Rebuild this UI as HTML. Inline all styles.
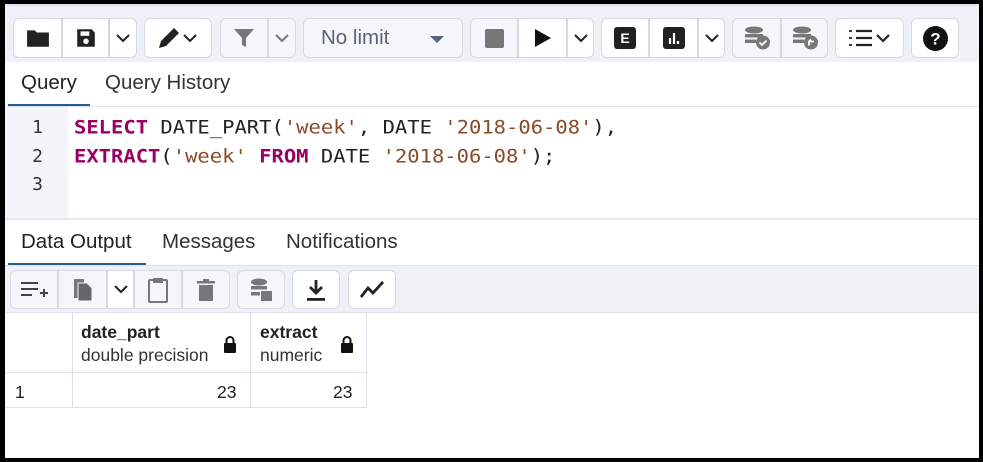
<!DOCTYPE html>
<html><head><meta charset="utf-8"><style>
*{box-sizing:border-box;margin:0;padding:0}
body{width:983px;height:462px;background:#000;position:relative;overflow:hidden;font-family:"Liberation Sans",sans-serif}
#app{position:absolute;left:5px;top:4px;width:974px;height:454px;background:#fff;overflow:hidden}
.abs{position:absolute}
.tb{position:absolute;left:0;top:0;width:974px;height:58px;background:#eef1f5;border-top:2px solid #dfe3ea}
.b{position:absolute;top:12px;height:40px;background:#fff;border:1px solid #d5dae2;display:flex;align-items:center;justify-content:center}
.g{border-radius:6px}
.tab{position:absolute;font-size:20.5px;color:#222}
.code{position:absolute;font-family:"DejaVu Sans Mono","Liberation Mono",monospace;font-size:20.5px;white-space:pre;color:#222;transform:scaleY(0.92);transform-origin:0 0}
.kw{color:#990066;font-weight:bold}
.st{color:#8a4a2a}
.ln{position:absolute;left:0;width:58px;text-align:right;padding-right:20px;font-family:"DejaVu Sans Mono",monospace;font-size:18px;color:#333}
</style></head><body>
<div id="app">
<div class="tb">
 <div class="b g" style="left:8px;width:124px"></div>
 <div class="b" style="left:8px;width:49px;border-radius:6px 0 0 6px"><svg width="24" height="20" viewBox="0 0 22 18"><path d="M1 2h7l2 2h11v13H1z" fill="#222"/></svg></div>
 <div class="b" style="left:57px;width:47px"><svg width="22" height="22" viewBox="0 0 20 20"><path d="M2 2h13l3 3v13H2z" fill="#222"/><rect x="5" y="4" width="8" height="4" fill="#fff"/><circle cx="10" cy="13" r="2.5" fill="#fff"/></svg></div>
 <div class="b" style="left:104px;width:28px;border-radius:0 6px 6px 0"><svg width="14" height="9"><path d="M1 1l6 6 6-6" stroke="#222" stroke-width="2" fill="none"/></svg></div>
 <div class="b g" style="left:139px;width:68px"><svg width="44" height="24"><path d="M3 22l2-7 13-13 5 5-13 13z" fill="#222"/><path d="M28 9l6 6 6-6" stroke="#222" stroke-width="2" fill="none"/></svg></div>
 <div class="b" style="left:215px;width:48px;border-radius:6px 0 0 6px;background:#f4f6f9"><svg width="22" height="22"><path d="M1 2h20l-8 9v9l-4-2v-7z" fill="#777"/></svg></div>
 <div class="b" style="left:263px;width:28px;border-radius:0 6px 6px 0;background:#f4f6f9"><svg width="14" height="9"><path d="M1 1l6 6 6-6" stroke="#777" stroke-width="2" fill="none"/></svg></div>
 <div class="b g" style="left:298px;width:160px;background:#f4f6f9;justify-content:flex-start;padding-left:17px;font-size:20.5px;color:#5a6478">No limit<svg style="position:absolute;right:18px;top:17px" width="14" height="8"><path d="M0 0h14l-7 7z" fill="#5a6478"/></svg></div>
 <div class="b" style="left:465px;width:48px;border-radius:6px 0 0 6px;background:#f4f6f9"><div style="width:19px;height:19px;background:#777;border-radius:2px"></div></div>
 <div class="b" style="left:513px;width:49px"><svg width="18" height="20"><path d="M1 1l16 9-16 9z" fill="#111"/></svg></div>
 <div class="b" style="left:562px;width:27px;border-radius:0 6px 6px 0"><svg width="14" height="9"><path d="M1 1l6 6 6-6" stroke="#222" stroke-width="2" fill="none"/></svg></div>
 <div class="b" style="left:596px;width:48px;border-radius:6px 0 0 6px"><div style="width:22px;height:22px;background:#222;border-radius:3px;color:#fff;font-size:14px;font-weight:bold;text-align:center;line-height:22px">E</div></div>
 <div class="b" style="left:644px;width:49px"><svg width="22" height="22"><rect width="22" height="22" rx="3" fill="#222"/><path d="M7 17v-6M11 17V6M15 17v-3" stroke="#fff" stroke-width="2.2"/></svg></div>
 <div class="b" style="left:693px;width:27px;border-radius:0 6px 6px 0"><svg width="14" height="9"><path d="M1 1l6 6 6-6" stroke="#222" stroke-width="2" fill="none"/></svg></div>
 <div class="b" style="left:727px;width:49px;border-radius:6px 0 0 6px;background:#f4f6f9"><svg width="28" height="24"><ellipse cx="11" cy="4" rx="9" ry="3.5" fill="#777"/><rect x="2" y="8" width="18" height="3.5" fill="#777"/><rect x="2" y="13.5" width="11" height="3.5" fill="#777"/><circle cx="20" cy="16.5" r="7" fill="#777"/><path d="M16.5 16.5l2.5 2.5 4.5-4.5" stroke="#fff" stroke-width="1.8" fill="none"/></svg></div>
 <div class="b" style="left:776px;width:47px;border-radius:0 6px 6px 0;background:#f4f6f9"><svg width="28" height="24"><ellipse cx="11" cy="4" rx="9" ry="3.5" fill="#777"/><rect x="2" y="8" width="18" height="3.5" fill="#777"/><rect x="2" y="13.5" width="11" height="3.5" fill="#777"/><circle cx="20" cy="16.5" r="7" fill="#777"/><path d="M18 19.5v-4h5M18 15.5l2-2" stroke="#fff" stroke-width="1.8" fill="none"/></svg></div>
 <div class="b g" style="left:830px;width:69px"><svg width="46" height="22"><path d="M9 4h16M9 11h16M9 18h16" stroke="#222" stroke-width="2.2"/><path d="M2 4h3M2 11h3M2 18h3" stroke="#222" stroke-width="1.8"/><path d="M30 8l6 6 6-6" stroke="#222" stroke-width="2.2" fill="none"/></svg></div>
 <div class="b g" style="left:906px;width:48px"><svg width="25" height="25"><circle cx="12.5" cy="12.5" r="12.5" fill="#111"/><text x="12.5" y="18.5" font-size="17" font-weight="bold" fill="#fff" text-anchor="middle" font-family="Liberation Sans">?</text></svg></div>
</div>
<div class="tab" style="left:16px;top:67px">Query</div>
<div class="tab" style="left:100px;top:67px;color:#333">Query History</div>
<div class="abs" style="left:3px;top:100px;width:82px;height:3px;background:#2a5d8f"></div>
<div class="abs" style="left:0;top:102px;width:974px;height:1px;background:#dde2ea"></div>
<div class="abs" style="left:0;top:103px;width:63px;height:111px;background:#f3f5f8"></div>
<div class="ln" style="top:113px">1</div>
<div class="ln" style="top:142px">2</div>
<div class="ln" style="top:170px">3</div>
<div class="code" style="left:69px;top:112px"><span class="kw">SELECT</span> DATE_PART(<span class="st">'week'</span>, DATE <span class="st">'2018-06-08'</span>),</div>
<div class="code" style="left:69px;top:141px"><span class="kw">EXTRACT</span>(<span class="st">'week'</span> <span class="kw">FROM</span> DATE <span class="st">'2018-06-08'</span>);</div>
<div class="abs" style="left:0;top:214px;width:974px;height:2px;background:#e3e7ee"></div>
<div class="tab" style="left:16px;top:226px">Data Output</div>
<div class="tab" style="left:157px;top:226px;color:#333">Messages</div>
<div class="tab" style="left:281px;top:226px;color:#333">Notifications</div>
<div class="abs" style="left:3px;top:259px;width:138px;height:3px;background:#2a5d8f"></div>
<div class="abs" style="left:0;top:261px;width:974px;height:48px;background:#eef1f5;border-top:1px solid #dde2ea;border-bottom:1px solid #dde2ea"></div>
<div class="b g" style="top:266px;left:5px;width:220px;height:39px;background:#f4f6f9"></div>
<div class="b" style="top:266px;left:5px;width:48px;height:39px;border-radius:6px 0 0 6px;background:#f4f6f9"><svg width="28" height="20"><path d="M1 3h17M1 9h17M1 15h11M20 13h8M24 9v8" stroke="#444" stroke-width="2"/></svg></div>
<div class="b" style="top:266px;left:53px;width:49px;height:39px;background:#f4f6f9"><svg width="22" height="26"><path d="M2 2h10v19H2z" fill="#777"/><path d="M6 6h9l5 5v13H6z" fill="#666" stroke="#f4f6f9" stroke-width="1"/></svg></div>
<div class="b" style="top:266px;left:102px;width:27px;height:39px;background:#fff"><svg width="14" height="9"><path d="M1 1l6 6 6-6" stroke="#222" stroke-width="2" fill="none"/></svg></div>
<div class="b" style="top:266px;left:129px;width:48px;height:39px;background:#f4f6f9"><svg width="20" height="26"><rect x="1" y="3" width="18" height="22" rx="1" fill="none" stroke="#777" stroke-width="2"/><rect x="5" y="1" width="10" height="5" fill="#777"/></svg></div>
<div class="b" style="top:266px;left:177px;width:48px;height:39px;border-radius:0 6px 6px 0;background:#f4f6f9"><svg width="18" height="22"><rect x="0" y="2" width="18" height="2.5" fill="#777"/><rect x="6" y="0" width="6" height="2" fill="#777"/><rect x="2" y="6" width="14" height="16" fill="#777"/></svg></div>
<div class="b g" style="top:266px;left:232px;width:48px;height:39px;background:#f4f6f9"><svg width="24" height="24"><ellipse cx="10" cy="4" rx="8" ry="3.5" fill="#777"/><rect x="2" y="8" width="16" height="3.5" fill="#777"/><rect x="2" y="14" width="9" height="3.5" fill="#777"/><rect x="12" y="13" width="11" height="10" fill="#777"/></svg></div>
<div class="b g" style="top:266px;left:287px;width:48px;height:39px"><svg width="20" height="22"><path d="M10 1v12M4 8l6 6 6-6" stroke="#222" stroke-width="2.8" fill="none"/><rect x="1" y="19" width="18" height="2.8" fill="#222"/></svg></div>
<div class="b g" style="top:266px;left:343px;width:48px;height:39px"><svg width="24" height="18"><path d="M1 16l7-9 5 5 10-11" stroke="#222" stroke-width="2.8" fill="none"/></svg></div>
<div class="abs" style="left:0;top:309px;width:362px;height:95px">
 <div class="abs" style="left:67px;top:0;width:1px;height:95px;background:#dde2ea"></div>
 <div class="abs" style="left:245px;top:0;width:1px;height:95px;background:#dde2ea"></div>
 <div class="abs" style="left:361px;top:0;width:1px;height:95px;background:#dde2ea"></div>
 <div class="abs" style="left:0;top:59px;width:362px;height:1px;background:#dde2ea"></div>
 <div class="abs" style="left:0;top:94px;width:362px;height:1px;background:#dde2ea"></div>
 <div class="abs" style="left:76px;top:9px;font-size:17.5px;font-weight:bold;color:#222">date_part</div>
 <div class="abs" style="left:76px;top:32px;font-size:17.5px;color:#333">double precision</div>
 <div class="abs" style="left:255px;top:9px;font-size:17.5px;font-weight:bold;color:#222">extract</div>
 <div class="abs" style="left:255px;top:32px;font-size:17.5px;color:#333">numeric</div>
 <svg class="abs" style="left:218px;top:22px" width="14" height="18"><path d="M3.5 8V5.5a3.5 3.5 0 0 1 7 0V8" stroke="#111" stroke-width="2" fill="none"/><rect x="1" y="8" width="12" height="10" rx="1" fill="#111"/></svg>
 <svg class="abs" style="left:335px;top:22px" width="14" height="18"><path d="M3.5 8V5.5a3.5 3.5 0 0 1 7 0V8" stroke="#111" stroke-width="2" fill="none"/><rect x="1" y="8" width="12" height="10" rx="1" fill="#111"/></svg>
 <div class="abs" style="left:10px;top:69px;font-size:17.5px;color:#222">1</div>
 <div class="abs" style="left:212px;top:69px;font-size:17.5px;color:#222">23</div>
 <div class="abs" style="left:328px;top:69px;font-size:17.5px;color:#222">23</div>
</div>
</div>
</body></html>
